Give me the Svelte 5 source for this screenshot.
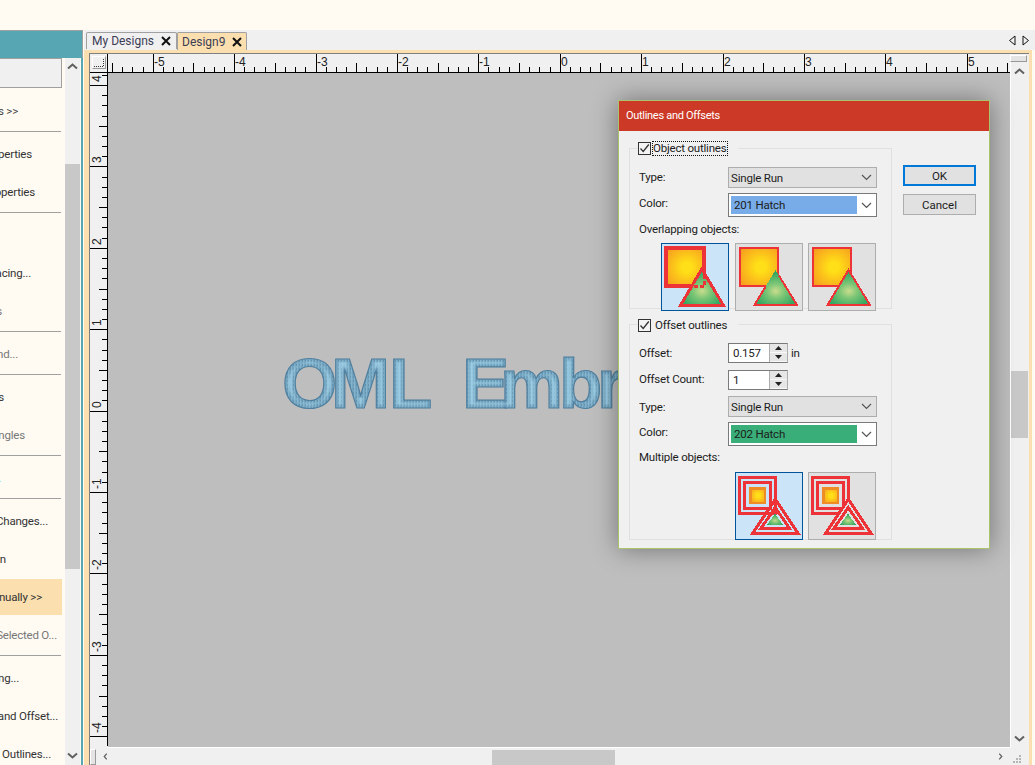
<script>
	const unit = 81.4;
	const hOrigin = 559.7 - 108;
	const vOrigin = 410.6 - 73;

	// one inch is 8 ticks, the middle one is longer
	const hTicks = [];
	for (let i = -6 * 8; i <= 6 * 8; i++) {
		const x = hOrigin + (i * unit) / 8;
		if (x >= 0 && x <= 902) hTicks.push({ x, len: i % 8 === 0 ? 18 : i % 4 === 0 ? 9 : 5, label: i % 8 === 0 ? i / 8 : null });
	}
	const vTicks = [];
	for (let i = -5 * 8; i <= 5 * 8; i++) {
		const y = vOrigin - (i * unit) / 8;
		if (y >= -8 && y <= 673) vTicks.push({ y, len: i % 8 === 0 ? 17 : i % 4 === 0 ? 8 : 5, label: i % 8 === 0 ? i / 8 : null });
	}

	const rows = [
		{ text: 'Stitches >>', end: 18, c: 'blueish' },
		{ sep: true },
		{ text: 'Properties', end: 32 },
		{ text: 'Properties', end: 35 },
		{ sep: true },
		{ text: '', end: 0 },
		{ text: 'Spacing...', end: 31 },
		{ text: 'Objects', end: 2, c: 'off' },
		{ sep: true },
		{ text: 'Round...', end: 18, c: 'off' },
		{ sep: true },
		{ text: 'Objects', end: 4 },
		{ text: 'Angles', end: 25, c: 'off' },
		{ sep: true },
		{ text: '.', end: 1, c: 'teal' },
		{ sep: true },
		{ text: 'Changes...', end: 48 },
		{ text: 'Design', end: 6 },
		{ text: 'Manually >>', end: 42, c: 'active' },
		{ text: 'Selected O...', end: 57, c: 'off' },
		{ sep: true },
		{ text: 'Spacing...', end: 19 },
		{ text: 'and Offset...', end: 58 },
		{ text: 'Outlines...', end: 51 }
	];

	const letterX = '282 331 389 462 500 559 597';
</script>

{#snippet chevron(dir)}
	<svg class="chev" width="11" height="7" viewBox="0 0 11 7" style="transform: rotate({dir}deg)">
		<path d="M1 5.5 5.5 1.5 10 5.5" fill="none" stroke="#606060" stroke-width="2" />
	</svg>
{/snippet}

{#snippet drop()}
	<svg class="drop" width="11" height="7" viewBox="0 0 11 7">
		<path d="M1 1 5.5 5.5 10 1" fill="none" stroke="#555" stroke-width="1.2" />
	</svg>
{/snippet}

{#snippet closeX()}
	<svg width="10" height="10" viewBox="0 0 10 10">
		<path d="M1 1 9 9M9 1 1 9" fill="none" stroke="#111" stroke-width="2" />
	</svg>
{/snippet}

{#snippet check()}
	<span class="box">
		<svg width="11" height="11" viewBox="0 0 11 11">
			<path d="M1.5 5.5 4.2 8.5 9.8 1.5" fill="none" stroke="#333" stroke-width="1.3" />
		</svg>
	</span>
{/snippet}

{#snippet spin()}
	<span class="spin">
		<button type="button"><svg width="7" height="4" viewBox="0 0 7 4"><path d="M3.5 0 7 4H0z" fill="#222" /></svg></button>
		<button type="button"><svg width="7" height="4" viewBox="0 0 7 4"><path d="M0 0H7L3.5 4z" fill="#222" /></svg></button>
	</span>
{/snippet}

{#snippet overlap(kind)}
	<svg width="66" height="66" viewBox="1 1 66 66" shape-rendering="crispEdges">
		{#if kind === 0}
			<rect x="5" y="5.3" width="38" height="38" fill="url(#sq)" stroke="#ee3338" stroke-width="4" />
			<path d="M40.8 26 62.5 62.5H19.5z" fill="url(#tri)" stroke="#ee3338" stroke-width="3" />
			<path d="M43.3 31.7V43.3H30.7" fill="none" stroke="#ee3338" stroke-width="3" stroke-dasharray="4 2" />
		{:else if kind === 1}
			<rect x="5" y="5" width="38" height="38" fill="url(#sq)" stroke="#ee3338" stroke-width="2" />
			<path d="M40.5 27 62 62H19.5z" fill="url(#tri)" />
			<path d="M44 32.7 62 62H19.5L30.3 44" fill="none" stroke="#ee3338" stroke-width="2" />
		{:else}
			<rect x="5" y="5" width="38" height="38" fill="url(#sq)" stroke="#ee3338" stroke-width="2" />
			<path d="M40.5 27 62 62H19.5z" fill="url(#tri)" stroke="#ee3338" stroke-width="2" />
		{/if}
	</svg>
{/snippet}

{#snippet multiple(bg, merged)}
	<svg width="66" height="66" viewBox="1 1 66 66" shape-rendering="crispEdges">
		<rect x="4.5" y="5.5" width="35.7" height="35.7" fill="none" stroke="#ee3338" stroke-width="3" />
		<rect x="9.5" y="10.5" width="26" height="26" fill="none" stroke="#ee3338" stroke-width="3" />
		<rect x="15.25" y="16.25" width="14.5" height="14.5" fill="url(#sq)" stroke="#f08c26" stroke-width="2.5" />
		<path d="M40.3 27.2 63.2 61.5H17.5z" fill={merged ? bg : 'none'} stroke="#ee3338" stroke-width="3" />
		<path d="M40.2 35.5 54.8 56.8H25.7z" fill="none" stroke="#ee3338" stroke-width="3" />
		<path d="M40 41.7 48.3 53.3H31.7z" fill="url(#tri)" />
	</svg>
{/snippet}

<svg class="defs" width="0" height="0">
	<defs>
		<radialGradient id="sq" cx="0.55" cy="0.5" r="0.65">
			<stop offset="0.2" stop-color="#ffdf17" />
			<stop offset="1" stop-color="#f7a01f" />
		</radialGradient>
		<radialGradient id="tri" cx="0.5" cy="0.6" r="0.6">
			<stop offset="0" stop-color="#c9dd8d" />
			<stop offset="0.35" stop-color="#7cc676" />
			<stop offset="0.85" stop-color="#36a761" />
		</radialGradient>
		<pattern id="hatch" width="3" height="4" patternUnits="userSpaceOnUse">
			<rect width="3" height="4" fill="#72a2bd" />
			<rect width="1" height="4" fill="#82b2cb" />
			<rect x="2" width="1" height="2" fill="#6291ad" />
		</pattern>
		<filter id="inset" x="-5%" y="-5%" width="110%" height="110%">
			<feMorphology operator="erode" radius="3" />
			<feGaussianBlur stdDeviation="1.2" />
		</filter>
	</defs>
</svg>

<div class="page">
	<div class="topbar"></div>
	<div class="main">
		<aside class="side">
			<div class="side-head"></div>
			<div class="side-body">
				<div class="list">
					<div class="list-top"></div>
					<div class="rows">
						{#each rows as row}
							{#if row.sep}
								<div class="sep"></div>
							{:else}
								<div class="row {row.c ?? ''}" style:padding-right="{62 - row.end}px">
									<span>{row.text}</span>
								</div>
							{/if}
						{/each}
					</div>
				</div>
				<div class="side-scroll">
					<div class="side-up">{@render chevron(0)}</div>
					<div class="side-thumb"></div>
					<div class="side-down">{@render chevron(180)}</div>
				</div>
			</div>
		</aside>

		<section class="work">
			<div class="tabs">
				<div class="tab">My Designs {@render closeX()}</div>
				<div class="tab on">Design9 {@render closeX()}</div>
				<div class="tab-nav">
					<svg width="8" height="11" viewBox="0 0 8 11"><path d="M7 1V10L1.5 5.5z" fill="#f0f0f0" stroke="#111" /></svg>
					<svg width="8" height="11" viewBox="0 0 8 11"><path d="M1 1V10L6.5 5.5z" fill="#f0f0f0" stroke="#111" /></svg>
				</div>
			</div>
			<div class="frame">
				<div class="view">
					<div class="corner">
						<span>
							<svg width="12" height="12" viewBox="0 0 12 12">
								<path d="M1 9.5H11M10.5 2V9" fill="none" stroke="#333" stroke-dasharray="1 1" />
							</svg>
						</span>
					</div>
					<svg class="hruler" width="902" height="19" viewBox="0 0 902 19">
						<path d="M0 18.5H902" stroke="#000" />
						{#each hTicks as t}
							<path d="M{Math.round(t.x) + 0.5} 18V{18 - t.len}" stroke="#000" />
							{#if t.label !== null}
								<text x={Math.round(t.x) + 1} y="12">{t.label}</text>
							{/if}
						{/each}
					</svg>
					<div class="vscroll">
						<div class="split"></div>
						<div class="v-up">{@render chevron(0)}</div>
						<div class="v-thumb"></div>
						<div class="v-down">{@render chevron(180)}</div>
					</div>
					<svg class="vruler" width="18" height="673" viewBox="0 0 18 673">
						<path d="M17.5 0V673" stroke="#000" />
						{#each vTicks as t}
							<path d="M17 {Math.round(t.y) + 0.5}H{17 - t.len}" stroke="#000" />
							{#if t.label !== null}
								<text transform="translate(11 {Math.round(t.y) - 3}) rotate(-90)">{t.label}</text>
							{/if}
						{/each}
					</svg>
					<div class="canvas">
						<svg class="stitched" width="340" height="70" viewBox="280 350 340 70">
							<text class="base" x={letterX} y="408">OMLEmbr</text>
							<text class="shine" x={letterX} y="408">OMLEmbr</text>
						</svg>
					</div>
					<div class="hscroll">
						<div class="h-split"></div>
						<div class="h-left">{@render chevron(-90)}</div>
						<div class="h-thumb"></div>
						<div class="h-right">{@render chevron(90)}</div>
						<svg class="grip" width="10" height="10" viewBox="0 0 10 10">
							<path d="M7 1h2v2H7zM4 4h2v2H4zM7 4h2v2H7zM1 7h2v2H1zM4 7h2v2H4zM7 7h2v2H7z" fill="#b5b5b5" />
						</svg>
					</div>
				</div>
			</div>
		</section>
	</div>

	<div class="dialog">
		<div class="title">Outlines and Offsets</div>
		<div class="dlg-body">
			<div class="groups">
				<fieldset class="group g1">
					<div class="legend">{@render check()}<span class="focus">Object outlines</span></div>
					<div class="field f-select">
						<span class="lab nudge">Type:</span>
						<div class="select">Single Run {@render drop()}</div>
					</div>
					<div class="field f-color">
						<span class="lab up">Color:</span>
						<div class="color"><span class="swatch blue">201 Hatch</span>{@render drop()}</div>
					</div>
					<div class="cap">Overlapping objects:</div>
					<div class="pics">
						<button type="button" class="pic sel">{@render overlap(0)}</button>
						<button type="button" class="pic">{@render overlap(1)}</button>
						<button type="button" class="pic last">{@render overlap(2)}</button>
					</div>
				</fieldset>
				<fieldset class="group g2">
					<div class="legend">{@render check()}<span class="plain">Offset outlines</span></div>
					<div class="field f-num">
						<span class="lab">Offset:</span>
						<div class="num"><span class="val">0.157</span>{@render spin()}</div>
						<span class="unit">in</span>
					</div>
					<div class="field f-num second">
						<span class="lab nudge">Offset Count:</span>
						<div class="num"><span class="val">1</span>{@render spin()}</div>
					</div>
					<div class="field f-select third">
						<span class="lab">Type:</span>
						<div class="select">Single Run {@render drop()}</div>
					</div>
					<div class="field f-color">
						<span class="lab up">Color:</span>
						<div class="color"><span class="swatch green">202 Hatch</span>{@render drop()}</div>
					</div>
					<div class="cap">Multiple objects:</div>
					<div class="pics right">
						<button type="button" class="pic sel">{@render multiple('#cce4f7', false)}</button>
						<button type="button" class="pic last">{@render multiple('#e1e1e1', true)}</button>
					</div>
				</fieldset>
			</div>
			<div class="actions">
				<button type="button" class="btn primary">OK</button>
				<button type="button" class="btn">Cancel</button>
			</div>
		</div>
	</div>
</div>

<style>
	:global(body) {
		margin: 0;
		background: #fffbf3;
	}

	.defs {
		position: absolute;
	}

	.page {
		position: relative;
		width: 1035px;
		height: 765px;
		overflow: hidden;
		background: #fffbf3;
		font-family: Roboto, 'Noto Sans', sans-serif;
		font-size: 11.5px;
		letter-spacing: -0.2px;
		color: #222;
	}

	.topbar {
		height: 30px;
	}

	.main {
		display: flex;
		height: 735px;
	}

	/* left panel */
	.side {
		width: 83px;
		margin-right: 1px;
		flex: none;
		border-top: 1px solid #a0a0a0;
		box-sizing: border-box;
	}

	.side-head {
		height: 27px;
		background: #56a7b3;
		border-right: 1px solid #a0a0a0;
	}

	.side-body {
		display: flex;
		height: 707px;
		border-right: 2px solid #56a7b3;
	}

	.list {
		width: 65px;
		flex: none;
		overflow: hidden;
	}

	.list-top {
		width: 62px;
		height: 30px;
		box-sizing: border-box;
		background: #f0f0f0;
		border: 1px solid #a0a0a0;
		border-left: 0;
	}

	.rows {
		width: 62px;
		padding-top: 4px;
	}

	.row {
		display: flex;
		justify-content: flex-end;
		align-items: center;
		height: 38px;
		box-sizing: border-box;
		overflow: hidden;
		white-space: nowrap;
		color: #333;
	}

	.row span {
		flex: none;
	}

	.row.off {
		color: #777;
	}

	.row.teal {
		color: #5cc;
	}

	.row.blueish {
		color: #444;
	}

	.row.active {
		height: 36px;
		margin: 1px 0;
		background: #fbdfae;
	}

	.sep {
		height: 1px;
		margin: 1px 1px 3px 0;
		background: #a0a0a0;
	}

	.side-scroll {
		width: 15px;
		background: #f0f0f0;
		margin-right: 1px;
		display: flex;
		flex-direction: column;
		align-items: center;
	}

	.side-up {
		height: 18px;
		margin-top: 5px;
	}

	.side-thumb {
		align-self: stretch;
		height: 405px;
		margin-top: 83px;
		background: #c8c8c8;
	}

	.side-down {
		margin-top: auto;
		margin-bottom: 3px;
		height: 10px;
	}

	.chev {
		display: block;
	}

	/* tabs */
	.work {
		flex: 1;
		min-width: 0;
	}

	.tabs {
		display: flex;
		align-items: flex-end;
		height: 20px;
		padding-left: 2px;
		background: #f0f0f0;
		box-sizing: border-box;
	}

	.tab {
		display: flex;
		align-items: center;
		justify-content: space-between;
		width: 91px;
		height: 17px;
		margin-bottom: 1px;
		box-sizing: border-box;
		padding: 0 5px;
		border: 1px solid #a0a0a0;
		border-bottom: 0;
		border-radius: 2px 2px 0 0;
		font-size: 12px;
		letter-spacing: 0;
		color: #3c3c55;
		background: #f0f0f0;
	}

	.tab.on {
		width: 70px;
		height: 18px;
		margin-bottom: 0;
		padding: 0 4px;
		background: #fbdfae;
	}

	.tab-nav {
		display: flex;
		gap: 6px;
		margin-left: auto;
		align-self: center;
		margin-right: 5px;
	}

	/* design view */
	.frame {
		height: 715px;
		box-sizing: border-box;
		margin-right: 3px;
		border: solid #fbdfae;
		border-width: 3px 3px 0 5px;
	}

	.view {
		display: grid;
		grid-template-columns: 18px 902px 18px;
		grid-template-rows: 19px 675px 17px;
		height: 712px;
		box-sizing: border-box;
		border-top: 1px solid #808080;
		border-left: 1px solid #808080;
		background: #f0f0f0;
	}

	.corner {
		display: flex;
		padding: 2px 3px 3px 2px;
		border-bottom: 1px solid #000;
		border-right: 1px solid #000;
		box-sizing: border-box;
		background: #f0f0f0;
	}

	.corner span {
		flex: 1;
		display: flex;
		border: 1px solid;
		border-color: #fff #999 #999 #fff;
	}

	.hruler,
	.vruler {
		display: block;
		background: #f0f0f0;
	}

	.hruler text,
	.vruler text {
		font-family: 'Liberation Sans', sans-serif;
		font-size: 12px;
		letter-spacing: 0;
		fill: #222;
	}

	.vscroll {
		grid-row: 1 / 3;
		grid-column: 3;
		display: flex;
		flex-direction: column;
		align-items: center;
		border-left: 1px solid #fff;
		box-sizing: border-box;
	}

	.split {
		align-self: stretch;
		height: 7px;
		margin: 1px 1px 0 -1px;
		background: #e4e4e4;
		border: 1px solid #999;
		border-top-color: #fff;
		border-left-color: #fff;
		box-sizing: border-box;
	}

	.v-up {
		height: 10px;
		margin-top: 6px;
	}

	.v-thumb {
		align-self: stretch;
		height: 67px;
		margin-top: 293px;
		background: #c8c8c8;
	}

	.v-down {
		margin-top: auto;
		margin-bottom: 3px;
		height: 10px;
	}

	.canvas {
		position: relative;
		background: #bebebe;
		border-bottom: 1px solid #fff;
		overflow: hidden;
	}

	.stitched {
		position: absolute;
		left: 172px;
		top: 277px;
	}

	.stitched text {
		font-family: 'Liberation Sans', sans-serif;
		font-weight: 700;
		font-size: 71px;
		letter-spacing: 0;
	}

	.stitched .base {
		fill: url(#hatch);
		stroke: #4f7f9e;
		stroke-width: 1.2;
	}

	.stitched .shine {
		fill: #a6d8ee;
		opacity: 0.75;
		filter: url(#inset);
	}

	.hscroll {
		grid-column: 1 / 4;
		display: flex;
		align-items: center;
		height: 17px;
	}

	.h-split {
		width: 6px;
		height: 16px;
		margin-bottom: -1px;
		box-sizing: border-box;
		background: #e4e4e4;
		border: 1px solid #999;
		border-top-color: #fff;
		border-left-color: #fff;
	}

	.h-left {
		margin-left: 6px;
		width: 7px;
		display: flex;
		justify-content: center;
	}

	.h-thumb {
		width: 123px;
		height: 15px;
		margin: 2px 0 0 383px;
		background: #c8c8c8;
	}

	.h-right {
		margin-left: 382px;
		width: 7px;
		display: flex;
		justify-content: center;
	}

	.grip {
		margin: 5px 0 0 8px;
	}

	/* dialog */
	.dialog {
		position: absolute;
		left: 618px;
		top: 100px;
		width: 372px;
		height: 449px;
		box-sizing: border-box;
		border: 1px solid #a9c46c;
		background: #f0f0f0;
		box-shadow: 0 0 24px rgba(0, 0, 0, 0.4);
		color: #1c1c1c;
	}

	.title {
		height: 30px;
		padding-left: 7px;
		line-height: 30px;
		font-size: 11px;
		letter-spacing: -0.3px;
		color: #fff;
		background: #cc3a27;
	}

	.dlg-body {
		display: flex;
		padding: 17px 0 0 10px;
	}

	.groups {
		width: 263px;
		flex: none;
	}

	.group {
		position: relative;
		margin: 0;
		padding: 18px 0 0 9px;
		box-sizing: border-box;
		border: 1px solid #e0e0e0;
		border-radius: 0;
		min-width: 0;
	}

	.g1 {
		height: 161px;
		margin-bottom: 15px;
	}

	.g2 {
		height: 216px;
	}

	.legend {
		position: absolute;
		left: 8px;
		top: -7px;
		display: flex;
		align-items: center;
		padding-right: 11px;
		background: #f0f0f0;
	}

	.box {
		display: flex;
		align-items: center;
		justify-content: center;
		width: 13px;
		height: 13px;
		box-sizing: border-box;
		border: 1px solid #333;
		background: #f4f4f4;
		margin-right: 1px;
	}

	.focus {
		margin-left: 1px;
		outline: 1px dotted #111;
		line-height: 13px;
	}

	.plain {
		margin-left: 3px;
	}

	.field {
		display: flex;
		align-items: center;
	}

	.lab {
		width: 89px;
		flex: none;
	}

	.lab.nudge {
		margin-top: -2px;
	}

	.lab.up {
		margin-top: -4px;
	}

	.select {
		display: flex;
		align-items: center;
		justify-content: space-between;
		width: 149px;
		height: 21px;
		box-sizing: border-box;
		padding: 0 4px 0 2px;
		background: #e1e1e1;
		border: 1px solid #adadad;
	}

	.f-color {
		margin-top: 5px;
	}

	.color {
		display: flex;
		align-items: center;
		justify-content: space-between;
		width: 149px;
		height: 24px;
		box-sizing: border-box;
		padding: 2px 4px 2px 2px;
		background: #fff;
		border: 1px solid #7a7a7a;
	}

	.swatch {
		width: 126px;
		height: 18px;
		line-height: 19px;
		padding-left: 3px;
		box-sizing: border-box;
	}

	.swatch.blue {
		background: #78ace8;
	}

	.swatch.green {
		background: #3aae78;
	}

	.cap {
		margin-top: 5px;
		line-height: 15px;
	}

	.g2 .cap {
		margin-top: 4px;
	}

	.pics {
		display: flex;
		gap: 6px;
		margin: 6px 0 0 22px;
	}

	.g2 .pics {
		margin-top: 7px;
	}

	.pics.right {
		margin-left: 96px;
	}

	.pic {
		width: 68px;
		height: 68px;
		padding: 0;
		box-sizing: border-box;
		background: #e1e1e1;
		border: 1px solid #adadad;
		display: flex;
	}

	.pic.sel {
		background: #cce4f7;
		border-color: #005499;
	}

	.pic.last {
		margin-left: -1px;
	}

	.num {
		display: flex;
		width: 60px;
		height: 20px;
		box-sizing: border-box;
		background: #fff;
		border: 1px solid #7a7a7a;
		border-right-color: #adadad;
	}

	.val {
		flex: 1;
		padding-left: 4px;
		line-height: 19px;
	}

	.spin {
		display: flex;
		flex-direction: column;
		width: 17px;
		flex: none;
		background: #f0f0f0;
		border-left: 1px solid #adadad;
	}

	.spin button {
		flex: 1;
		padding: 0;
		display: flex;
		align-items: center;
		justify-content: center;
		background: #e6e6e6;
		border: 0;
		border-bottom: 1px solid #f8f8f8;
	}

	.unit {
		margin-left: 3px;
	}

	.second {
		margin-top: 7px;
	}

	.third {
		margin-top: 6px;
	}

	.actions {
		display: flex;
		flex-direction: column;
		gap: 8px;
		margin: 17px 0 0 11px;
	}

	.btn {
		width: 73px;
		height: 21px;
		padding: 0;
		font: inherit;
		color: #1c1c1c;
		background: #e1e1e1;
		border: 1px solid #adadad;
		box-sizing: border-box;
	}

	.btn.primary {
		border: 2px solid #0078d7;
	}
</style>
